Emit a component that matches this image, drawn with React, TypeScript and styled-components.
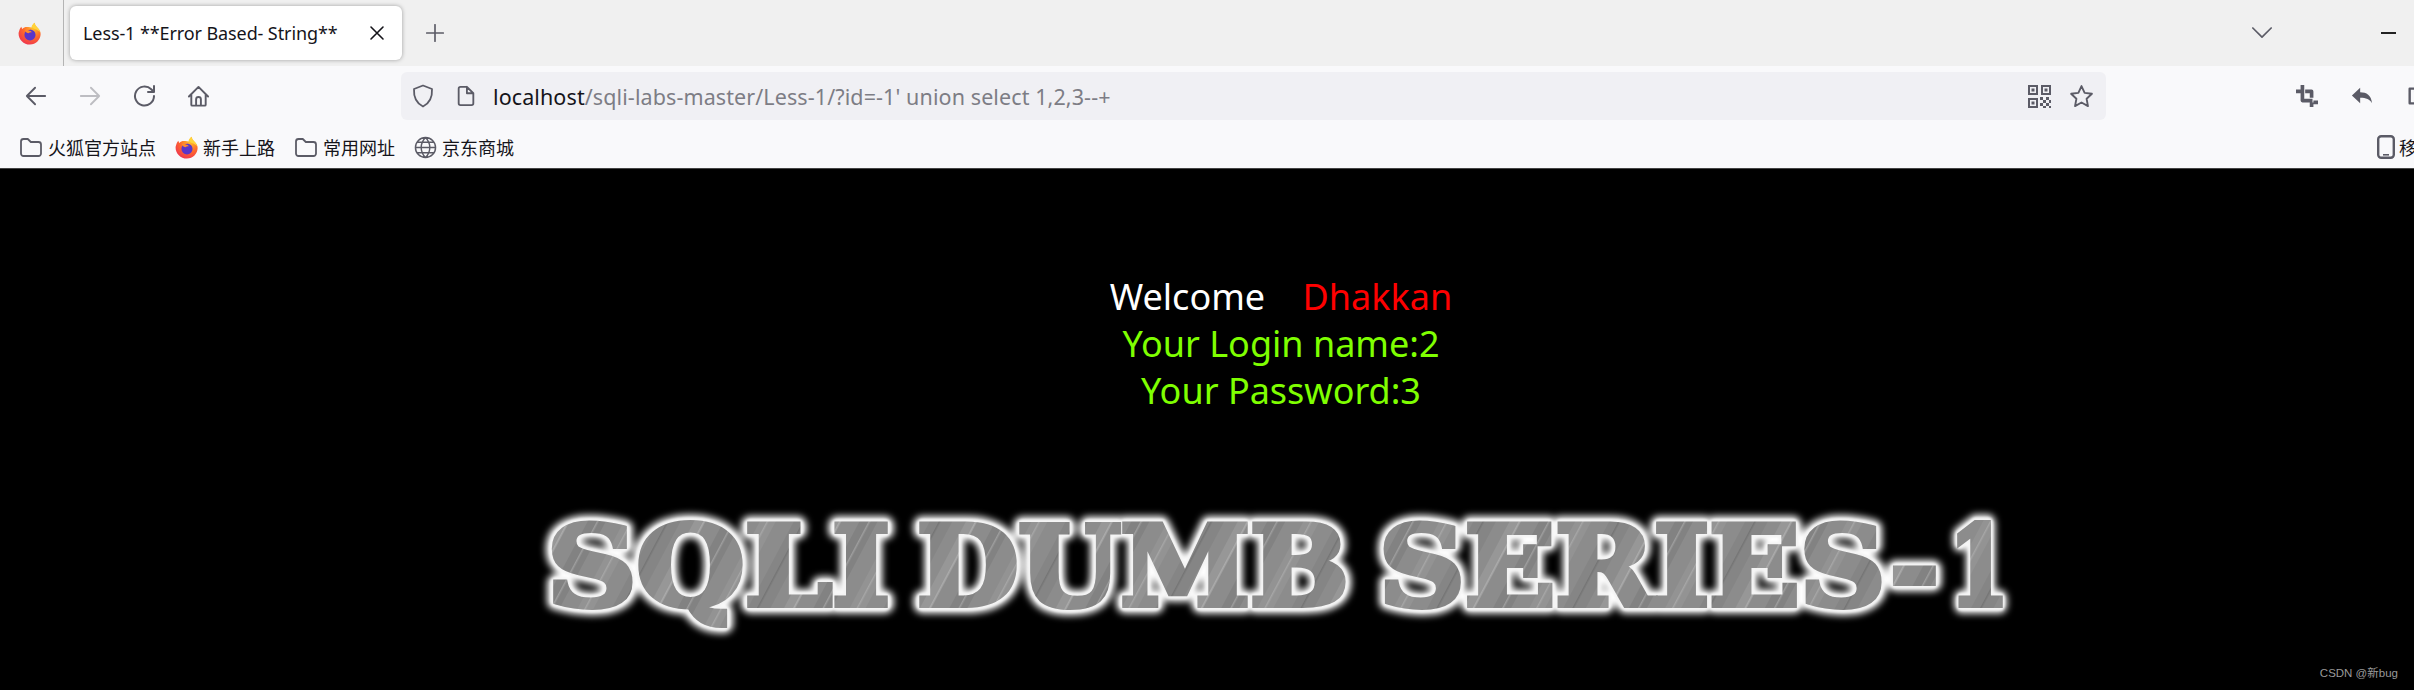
import React from "react";
import styled, { createGlobalStyle } from "styled-components";

const Global = createGlobalStyle`
  html, body { margin: 0; padding: 0; width: 2414px; height: 690px; overflow: hidden; background: #000; }
  body { font-family: "Noto Sans", "Noto Sans CJK SC", sans-serif; }
`;
const Frame = styled.div`width: 2414px; height: 690px; overflow: hidden; position: relative; background: #000;`;
const TabStrip = styled.div`height: 66px; background: #f0f0f0; display: flex; align-items: center; color: #15141a;`;
const LogoSlot = styled.div`width: 64px; height: 66px; box-sizing: border-box; border-right: 1px solid #b4b4b4; display: flex; align-items: center; padding-left: 18px; flex: none;`;
const Tab = styled.div`
  margin-left: 6px; width: 332px; height: 54px; box-sizing: border-box; background: #fff; border-radius: 6px; flex: none;
  box-shadow: 0 0 4px rgba(0,0,0,.35); display: flex; align-items: center; padding: 0 17px 0 13px; justify-content: space-between;
`;
const TabTitle = styled.span`font-size: 18px; color: #15141a; white-space: nowrap; font-family: "Noto Sans", sans-serif; letter-spacing: -0.1px;`;
const PlusSlot = styled.div`margin-left: 24px; display: flex;`;
const Spacer = styled.div`flex: 1;`;
const ChevronSlot = styled.div`display: flex; margin-right: 109px;`;
const MinBar = styled.div`width: 15px; height: 1.5px; background: #222; margin-right: 18px;`;
const Toolbar = styled.div`height: 60px; background: #f9f9fb; display: flex; align-items: center; padding-left: 25px;`;
const NavButton = styled.div`width: 54px; flex: none; display: flex;`;
const UrlBar = styled.div`
  margin-left: 160px; width: 1705px; height: 48px; flex: none; background: #f0f0f4; border-radius: 6px; display: flex; align-items: center;
  padding: 0 12px 0 10px; box-sizing: border-box;
`;
const UrlIcon = styled.div<{ $gap: number }>`display: flex; flex: none; margin-right: ${p => p.$gap}px;`;
const UrlText = styled.div`flex: 1; font-size: 21.5px; color: #7d7d85; white-space: nowrap; letter-spacing: 0.1px; font-family: "Noto Sans", sans-serif;`;
const Host = styled.span`color: #15141a;`;
const RightTools = styled.div`margin-left: 190px; display: flex; gap: 33px; flex: none;`;
const BookmarkBar = styled.div`
  height: 42px; background: #f9f9fb; display: flex; align-items: center; padding-left: 19px; border-bottom: 1px solid #444; box-sizing: content-box;
`;
const Bookmark = styled.div`display: flex; align-items: center; gap: 5px; margin-right: 19px; flex: none;`;
const BookmarkLabel = styled.span`font-size: 18px; color: #15141a; font-family: "Noto Sans CJK SC", sans-serif; white-space: nowrap;`;
const MobileBookmark = styled.div`margin-left: auto; display: flex; align-items: center; gap: 4px; width: 37px; overflow: hidden; flex: none;`;
const Page = styled.div`width: 2562px; text-align: center; padding-top: 104px;`;
const Line = styled.div<{ $color: string }>`font-size: 36px; line-height: 47px; color: ${p => p.$color}; font-family: "Noto Sans", sans-serif;`;
const Name = styled.span`color: #ff0000;`;
const Banner = styled.svg`display: block; margin: 66px auto 0; width: 1560px; height: 180px; overflow: visible;`;
const Watermark = styled.div`position: absolute; right: 16px; bottom: 10px; color: #9a9a9a; font-size: 11.5px; font-family: "Liberation Sans", "Noto Sans CJK SC", sans-serif;`;

const ic = "#5b5b66";
const Firefox = ({ size = 23 }: { size?: number }) => (
  <svg width={size} height={size} viewBox="0 0 24 24" style={{ flex: "none" }}>
    <defs>
      <radialGradient id="ffb" cx="0.65" cy="0.25" r="0.95">
        <stop offset="0" stopColor="#ffc02a" />
        <stop offset="0.45" stopColor="#ff6a2b" />
        <stop offset="1" stopColor="#e8205e" />
      </radialGradient>
    </defs>
    <path d="M1.2 9.5C1.6 7.5 2.6 6 3.6 5c0 1 .4 1.8 1 2.3C6 5.6 8 5 9.6 5.2c2-.2 3.6.1 4.6.6.5-1.9 1.7-3.8 3.2-5 .1 2 1.4 3.6 3 5.2 2 2 3.2 4 3.2 6.6C23.6 18.6 18.6 23.6 12.4 23.6 5.8 23.6.6 18.2.6 12c0-1 .2-1.700.6-2.500z" fill="url(#ffb)" />
    <path d="M17.400.8c.1 2 1.400 3.600 3 5.200 1.500 1.500 2.600 3.200 3 5-1.500-2-3.500-3-6-3.800-1-.3-2.500-1-3.200-2.400.500-1.700 1.700-3 3.200-4z" fill="#ffd43a" />
    <circle cx="12.500" cy="13.500" r="5.800" fill="#5a35c9" />
    <path d="M7 8.500c2-1.500 4.600-1.500 6.500-.8-1.300.2-2.500.8-3 1.600 1.200-.2 3 .1 4 1.400-1.200-.3-2.700 0-3.500 1C9.500 11.500 8 10.500 7 8.500z" fill="#ff8a2c" />
  </svg>
);
const Stroke = ({ w, d, color = ic, sw = 2 }: { w: number; d: string; color?: string; sw?: number }) => (
  <svg width={w} height={w} viewBox="0 0 24 24" fill="none" stroke={color} strokeWidth={sw} strokeLinecap="round" strokeLinejoin="round" style={{ flex: "none" }}><path d={d} /></svg>
);
const Filled = ({ w, d }: { w: number; d: string }) => (
  <svg width={w} height={w} viewBox="0 0 24 24" fill={ic} style={{ flex: "none" }}><path d={d} /></svg>
);
const folder = "M2 6.500A2.500 2.500 0 0 1 4.500 4h4.300l3 3h7.700A2.500 2.500 0 0 1 22 9.500v9a2.500 2.500 0 0 1-2.500 2.500h-15A2.500 2.500 0 0 1 2 18.500z";
const globe = "M12 1.500a10.500 10.500 0 1 0 0 21 10.500 10.500 0 0 0 0-21zM1.500 12h21M3.500 6.500h17M3.500 17.500h17M12 1.500c-6 6-6 15 0 21M12 1.500c6 6 6 15 0 21";
const Folder = () => <Stroke w={24} d={folder} sw={1.8} />;

const Qr = () => (
  <svg width={23} height={23} viewBox="0 0 23 23" fill={ic}>
    <path fillRule="evenodd" d="M0 0h10v10H0zM2 2v6h6V2zM13 0h10v10H13zM15 2v6h6V2zM0 13h10v10H0zM2 15v6h6v-6z" />
    <path d="M3.500 3.500h3v3h-3zM16.500 3.500h3v3h-3zM3.500 16.500h3v3h-3zM12 12h3v3h-3zM18 12h3v3h-3zM15 15h3v3h-3zM21 15h2v3h-2zM12 18h3v3h-3zM18 18h3v3h-3zM15 21h3v2h-3zM21 21h2v2h-2z" />
  </svg>
);

const words = [
  { t: "SQLI", x: 46, len: 343 },
  { t: "DUMB", x: 416, len: 432 },
  { t: "SERIES-", x: 878, len: 560 },
  { t: "1", x: 1448, len: 60 },
];
const Words = ({ ...rest }: React.SVGProps<SVGTextElement>) => (
  <>
    {words.map(w => (
      <text key={w.t} x={w.x} y={125} textLength={w.len} lengthAdjust="spacingAndGlyphs" fontFamily="'DejaVu Serif', serif" fontWeight="700" fontSize={110} {...rest}>{w.t}</text>
    ))}
  </>
);

export default function App() {
  return (
    <Frame>
      <Global />
      <TabStrip>
        <LogoSlot><Firefox /></LogoSlot>
        <Tab>
          <TabTitle>Less-1 **Error Based- String**</TabTitle>
          <Stroke w={16} d="M3 3l18 18M21 3L3 21" color="#15141a" sw={2.4} />
        </Tab>
        <PlusSlot><Stroke w={18} d="M12 1v22M1 12h22" sw={2.2} /></PlusSlot>
        <Spacer />
        <ChevronSlot><Stroke w={20} d="M1 6l11 11L23 6" sw={2} /></ChevronSlot>
        <MinBar />
      </TabStrip>
      <Toolbar>
        <NavButton><Stroke w={22} d="M22 12H2M11 3l-9 9 9 9" sw={2} /></NavButton>
        <NavButton><Stroke w={22} d="M2 12h20M13 3l9 9-9 9" color="#bdbdc2" sw={2} /></NavButton>
        <NavButton><Stroke w={24} d="M21 12a9.500 9.500 0 1 1-2.800-6.700L21 8M21 2v6h-6" sw={2} /></NavButton>
        <NavButton><Stroke w={23} d="M2 12L12 2l10 10M4.500 10v10.500a1 1 0 0 0 1 1h13a1 1 0 0 0 1-1V10M9.500 21.500V15a2.500 2.500 0 0 1 5 0v6.500" sw={2} /></NavButton>
        <UrlBar>
          <UrlIcon $gap={20}><Stroke w={24} d="M12 1.500l9 3.500c.5 9-3 14.500-9 17.500C6 19.500 2.500 14 3 5z" sw={1.800} /></UrlIcon>
          <UrlIcon $gap={16}><Stroke w={22} d="M13 2H6a2 2 0 0 0-2 2v16a2 2 0 0 0 2 2h12a2 2 0 0 0 2-2V9zM13 2v7h7z" sw={2} /></UrlIcon>
          <UrlText><Host>localhost</Host>/sqli-labs-master/Less-1/?id=-1' union select 1,2,3--+</UrlText>
          <UrlIcon $gap={18}><Qr /></UrlIcon>
          <Stroke w={25} d="M12 2l3 6.500 7 .9-5.100 4.800 1.300 7L12 17.800 5.800 21.200l1.300-7L2 9.400l7-.9z" sw={1.800} />
        </UrlBar>
        <RightTools>
          <Filled w={22} d="M5 0h4v15h9v4H7a2 2 0 0 1-2-2V9H0V5h5zM10 5h7a2 2 0 0 1 2 2v7h-4V9h-5zM19 17h5v4h-5v3h-4v-5h4z" />
          <Filled w={22} d="M10 3v5c7 0 12 3 13 12-2.500-4.500-6.500-6-13-6v6L1 11.500z" />
          <Stroke w={22} d="M4 4h6v4h4V4h6v7h-3v3h3v6h-7v-3h-3v3H4z" sw={2.600} />
        </RightTools>
      </Toolbar>
      <BookmarkBar>
        <Bookmark><Folder /><BookmarkLabel>火狐官方站点</BookmarkLabel></Bookmark>
        <Bookmark><Firefox /><BookmarkLabel>新手上路</BookmarkLabel></Bookmark>
        <Bookmark><Folder /><BookmarkLabel>常用网址</BookmarkLabel></Bookmark>
        <Bookmark><Stroke w={23} d={globe} sw={1.500} /><BookmarkLabel>京东商城</BookmarkLabel></Bookmark>
        <MobileBookmark>
          <svg width={18} height={24} viewBox="0 0 18 24" fill="none" style={{ flex: "none" }}><rect x="1.200" y="1.200" width="15.600" height="21.600" rx="3" stroke={ic} strokeWidth="2.400" /><rect x="6" y="19" width="6" height="1.600" fill={ic} /></svg>
          <BookmarkLabel>移动设备</BookmarkLabel>
        </MobileBookmark>
      </BookmarkBar>
      <Page>
        <Line $color="#ffffff">Welcome&nbsp;&nbsp;&nbsp; <Name>Dhakkan</Name></Line>
        <Line $color="#7fff00">Your Login name:2</Line>
        <Line $color="#7fff00">Your Password:3</Line>
        <Banner viewBox="0 0 1560 180" role="img" aria-label="SQLI DUMB SERIES-1">
          <defs>
            <filter id="glow" x="-10%" y="-40%" width="120%" height="180%"><feGaussianBlur stdDeviation="3.500" /></filter>
            <filter id="soft" x="-5%" y="-20%" width="110%" height="140%"><feGaussianBlur stdDeviation="0.800" /></filter>
            <pattern id="brushed" width="120" height="60" patternUnits="userSpaceOnUse" patternTransform="rotate(28)">
              <rect width="120" height="60" fill="#8c8c8c" />
              <rect x="8" width="14" height="60" fill="#939393" />
              <rect x="14" width="1.500" height="60" fill="#a6a6a6" />
              <rect x="38" width="20" height="60" fill="#858585" />
              <rect x="46" width="1.500" height="60" fill="#757575" />
              <rect x="70" width="10" height="60" fill="#979797" />
              <rect x="78" width="1.500" height="60" fill="#ababab" />
              <rect x="96" width="16" height="60" fill="#828282" />
              <rect x="104" width="1.500" height="60" fill="#9e9e9e" />
            </pattern>
          </defs>
          <g filter="url(#glow)"><Words fill="#fff" stroke="#fff" strokeWidth={17} strokeLinejoin="round" /></g>
          <g filter="url(#soft)"><Words fill="#fff" stroke="#f4f4f4" strokeWidth={11} strokeLinejoin="round" /></g>
          <Words fill="url(#brushed)" stroke="url(#brushed)" strokeWidth={6} strokeLinejoin="miter" />
        </Banner>
      </Page>
      <Watermark>CSDN @新bug</Watermark>
    </Frame>
  );
}
